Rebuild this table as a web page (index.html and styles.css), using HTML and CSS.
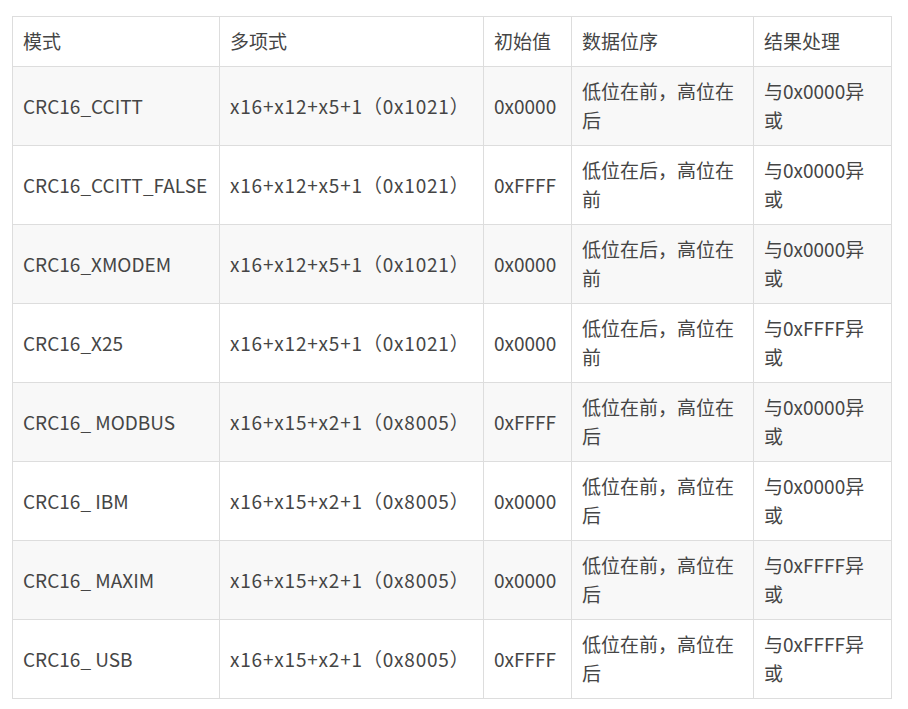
FILE: index.html
```html
<!DOCTYPE html>
<html lang="zh">
<head>
<meta charset="utf-8">
<link rel="stylesheet" href="styles.css">
</head>
<body>
<table class="crc">
  <colgroup>
    <col class="c1"><col class="c2"><col class="c3"><col class="c4"><col class="c5">
  </colgroup>
  <thead>
    <tr><th>模式</th><th>多项式</th><th>初始值</th><th>数据位序</th><th>结果处理</th></tr>
  </thead>
  <tbody>
    <tr><td>CRC16_CCITT</td><td class="poly">x16+x12+x5+1（0x1021）</td><td>0x0000</td><td>低位在前，高位在后</td><td>与0x0000异或</td></tr>
    <tr><td>CRC16_CCITT_FALSE</td><td class="poly">x16+x12+x5+1（0x1021）</td><td>0xFFFF</td><td>低位在后，高位在前</td><td>与0x0000异或</td></tr>
    <tr><td>CRC16_XMODEM</td><td class="poly">x16+x12+x5+1（0x1021）</td><td>0x0000</td><td>低位在后，高位在前</td><td>与0x0000异或</td></tr>
    <tr><td>CRC16_X25</td><td class="poly">x16+x12+x5+1（0x1021）</td><td>0x0000</td><td>低位在后，高位在前</td><td>与0xFFFF异或</td></tr>
    <tr><td>CRC16_ MODBUS</td><td class="poly">x16+x15+x2+1（0x8005）</td><td>0xFFFF</td><td>低位在前，高位在后</td><td>与0x0000异或</td></tr>
    <tr><td>CRC16_ IBM</td><td class="poly">x16+x15+x2+1（0x8005）</td><td>0x0000</td><td>低位在前，高位在后</td><td>与0x0000异或</td></tr>
    <tr><td>CRC16_ MAXIM</td><td class="poly">x16+x15+x2+1（0x8005）</td><td>0x0000</td><td>低位在前，高位在后</td><td>与0xFFFF异或</td></tr>
    <tr><td>CRC16_ USB</td><td class="poly">x16+x15+x2+1（0x8005）</td><td>0xFFFF</td><td>低位在前，高位在后</td><td>与0xFFFF异或</td></tr>
  </tbody>
</table>
</body>
</html>
```
FILE: styles.css
```css
html, body {
  margin: 0;
  padding: 0;
  background: #ffffff;
}
body {
  padding: 16px 0 0 12px;
  font-family: "Noto Sans CJK SC", "Noto Sans", sans-serif;
  font-size: 19px;
  line-height: 29px;
  color: #454545;
}
.crc {
  border-collapse: collapse;
  table-layout: fixed;
  width: 879px;
}
.c1 { width: 207px; }
.c2 { width: 264px; }
.c3 { width: 88px; }
.c4 { width: 182px; }
.c5 { width: 138px; }
.crc th, .crc td {
  border: 1px solid #dddddd;
  padding: 9px 10px 11px 10px;
  text-align: left;
  vertical-align: middle;
  font-weight: normal;
  word-break: break-all;
}
.crc td.poly {
  letter-spacing: 0.8px;
}
.crc tbody tr:nth-child(odd) td {
  background: #f8f8f8;
}
```
